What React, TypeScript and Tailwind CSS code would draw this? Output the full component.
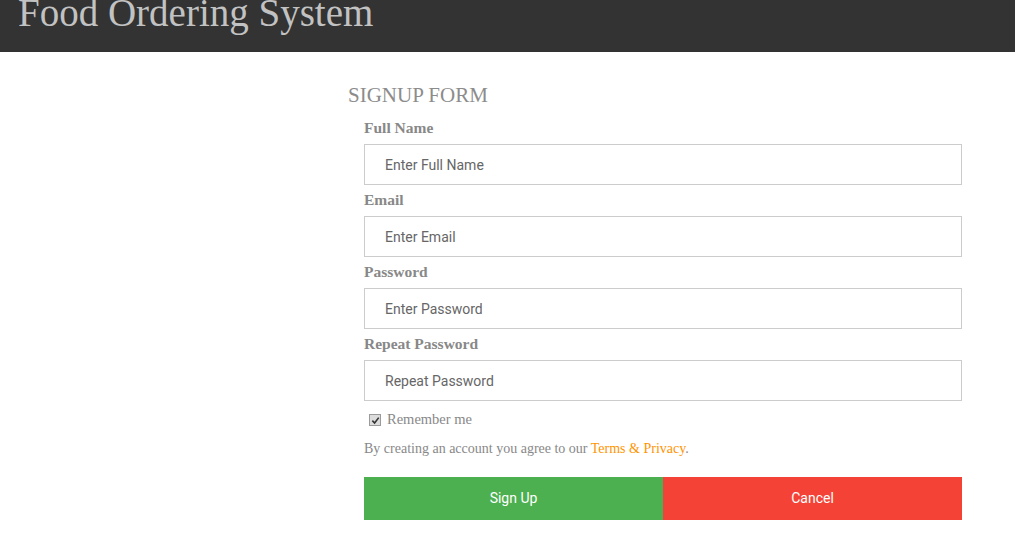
import React from 'react';

const serif = { fontFamily: '"Liberation Serif", "DejaVu Serif", serif' };
const sans = { fontFamily: 'Roboto, "Liberation Sans", Arial, sans-serif' };

const fields = [
    { label: 'Full Name', placeholder: 'Enter Full Name', type: 'text' },
    { label: 'Email', placeholder: 'Enter Email', type: 'text' },
    { label: 'Password', placeholder: 'Enter Password', type: 'password' },
    { label: 'Repeat Password', placeholder: 'Repeat Password', type: 'password' },
];

export default function App() {
    return (
        <div className="min-h-[533px] w-full bg-white">
            <header className="h-[52px] overflow-hidden bg-[#333333] pl-[18px]">
                <h1 style={serif} className="mt-[-7px] text-[39px] leading-none text-[#c2c2c2]">
                    Food Ordering System
                </h1>
            </header>

            <main className="pl-[348px] pr-[53px] pt-[31px]">
                <h2 style={serif} className="text-[21px] leading-[24px] text-[#8c8c8c]">
                    SIGNUP FORM
                </h2>

                <form className="mt-[11px] pl-[16px]" onSubmit={(e) => e.preventDefault()}>
                    {fields.map((f) => (
                        <div key={f.label} className="mb-[5px]">
                            <label style={serif} className="block text-[15.5px] font-bold leading-[20px] text-[#888888]">
                                {f.label}
                            </label>
                            <input
                                type={f.type}
                                placeholder={f.placeholder}
                                style={sans}
                                className="mt-[6px] block h-[41px] w-full border border-[#cccccc] px-[20px] text-[14px] text-[#666] outline-none placeholder:text-[#666]"
                            />
                        </div>
                    ))}

                    <div className="mt-[10px] flex h-[18px] items-center pl-[5px]">
                        <span className="flex h-[12px] w-[12px] items-center justify-center border border-[#9a9a9a] bg-[#dcdcdc]">
                            <svg viewBox="0 0 10 10" className="h-[9px] w-[9px]">
                                <path d="M1.5 5.2 L4 7.8 L8.6 1.8" fill="none" stroke="#333" strokeWidth="1.8" />
                            </svg>
                        </span>
                        <span style={serif} className="ml-[6px] text-[14.5px] text-[#888888]">
                            Remember me
                        </span>
                    </div>

                    <p style={serif} className="mt-[10px] text-[14px] leading-[20px] text-[#888888]">
                        By creating an account you agree to our{' '}
                        <a href="#" className="text-[#ff9400]">
                            Terms &amp; Privacy
                        </a>
                        .
                    </p>

                    <div style={sans} className="mt-[18px] flex">
                        <button type="submit" className="h-[43px] flex-1 bg-[#4caf50] text-[14px] text-white">
                            Sign Up
                        </button>
                        <button type="button" className="h-[43px] flex-1 bg-[#f44336] text-[14px] text-white">
                            Cancel
                        </button>
                    </div>
                </form>
            </main>
        </div>
    );
}
